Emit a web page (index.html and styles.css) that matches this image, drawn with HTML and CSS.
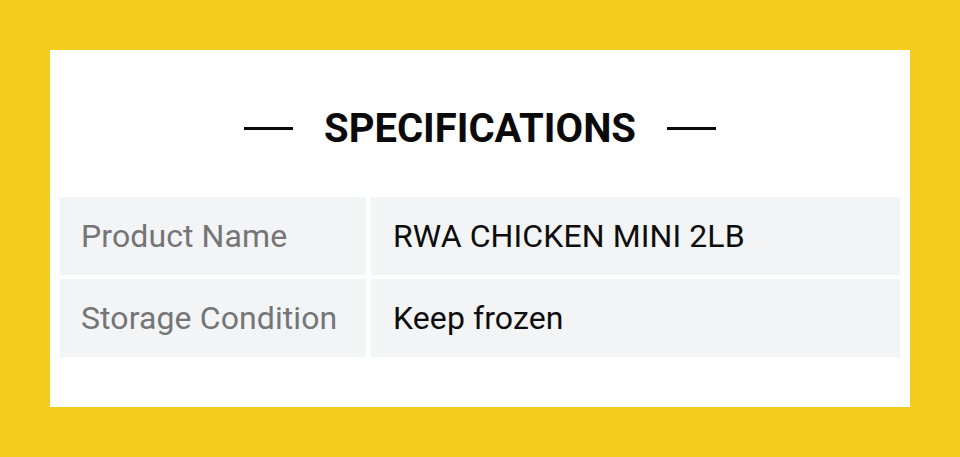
FILE: index.html
```html
<!DOCTYPE html>
<html>
<head>
<meta charset="utf-8">
<link rel="stylesheet" href="styles.css">
</head>
<body>
<div class="page">
  <section class="card">
    <h2 class="title"><span class="line"></span><span class="title-text">SPECIFICATIONS</span><span class="line"></span></h2>
    <div class="specs">
      <div class="cell label">Product Name</div>
      <div class="cell value">RWA CHICKEN MINI 2LB</div>
      <div class="cell label">Storage Condition</div>
      <div class="cell value">Keep frozen</div>
    </div>
  </section>
</div>
</body>
</html>
```
FILE: styles.css
```css
html, body {
  margin: 0;
  padding: 0;
}
body {
  font-family: Roboto, "Liberation Sans", sans-serif;
  background: #F2CD1F;
}
.page {
  padding: 50px;
  height: 457px;
  box-sizing: border-box;
}
.card {
  background: #fff;
  height: 357px;
  box-sizing: border-box;
  padding: 0 10px;
}
.title {
  margin: 0;
  height: 147px;
  display: flex;
  align-items: center;
  justify-content: center;
  gap: 31px;
  font-size: 40px;
  font-weight: 700;
  color: #0a0a0a;
  padding-top: 9px;
  box-sizing: border-box;
}
.line {
  width: 49px;
  height: 3px;
  background: #0a0a0a;
}
.specs {
  display: grid;
  grid-template-columns: 306px 1fr;
  column-gap: 5px;
  row-gap: 4px;
}
.cell {
  background: #F3F4F6;
  height: 78px;
  display: flex;
  align-items: center;
  font-size: 32px;
  box-sizing: border-box;
}
.label {
  color: #747576;
  padding-left: 21px;
  letter-spacing: 0.1px;
}
.value {
  color: #0d0d0d;
  padding-left: 22px;
  letter-spacing: 0.1px;
}
```
